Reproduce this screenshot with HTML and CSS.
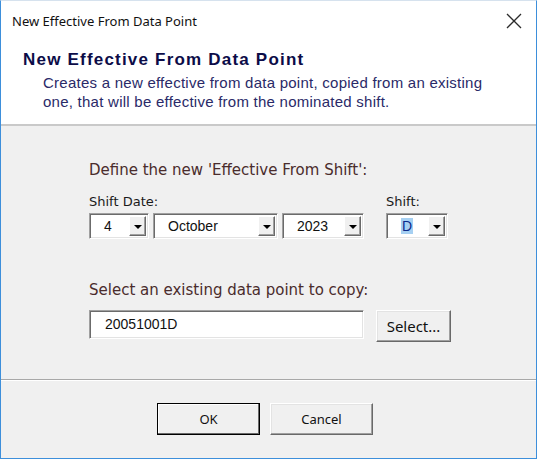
FILE: index.html
```html
<!DOCTYPE html>
<html>
<head>
<meta charset="utf-8">
<link rel="stylesheet" href="styles.css">
</head>
<body>
<div class="window">
  <div class="titlebar">
    <span class="title">New Effective From Data Point</span>
    <svg class="close" width="16" height="16" viewBox="0 0 16 16"><path d="M1 1 L15 15 M15 1 L1 15" stroke="#2b2b2b" stroke-width="1.3" fill="none"/></svg>
  </div>
  <div class="header">
    <div class="h-title">New Effective From Data Point</div>
    <div class="h-desc">Creates a new effective from data point, copied from an existing<br>one, that will be effective from the nominated shift.</div>
  </div>
  <div class="content">
    <div class="section-label">Define the new 'Effective From Shift':</div>
    <div class="date-row">
      <div class="group">
        <div class="small-label">Shift Date:</div>
        <div class="combos">
          <div class="combo w-day"><span class="val">4</span><span class="drop"><i class="tri"></i></span></div>
          <div class="combo w-month"><span class="val">October</span><span class="drop"><i class="tri"></i></span></div>
          <div class="combo w-year"><span class="val">2023</span><span class="drop"><i class="tri"></i></span></div>
        </div>
      </div>
      <div class="group">
        <div class="small-label">Shift:</div>
        <div class="combos">
          <div class="combo w-shift"><span class="val"><span class="sel">D</span></span><span class="drop"><i class="tri"></i></span></div>
        </div>
      </div>
    </div>
    <div class="section-label second">Select an existing data point to copy:</div>
    <div class="input-row">
      <div class="textbox">20051001D</div>
      <div class="btn raised select-btn">Select...</div>
    </div>
  </div>
  <div class="footer">
    <div class="btn default">OK</div>
    <div class="btn raised">Cancel</div>
  </div>
</div>
</body>
</html>
```

FILE: styles.css
```css
* { box-sizing: border-box; }
html, body { margin: 0; padding: 0; background: #ffffff; }
.window {
  width: 537px;
  height: 459px;
  border: 1px solid #3d8fdb;
  border-top-color: #d6e2ee;
  display: flex;
  flex-direction: column;
  background: #f0f0f0;
  font-family: "Liberation Sans", Arial, sans-serif;
}
.titlebar {
  height: 39px;
  background: #fff;
  display: flex;
  align-items: center;
  justify-content: space-between;
  padding: 0 14px 0 11px;
}
.title {
  font-family: "Noto Sans", "Open Sans", sans-serif;
  font-size: 13px;
  color: #111;
  margin-top: 1px;
}
.close { margin-top: 1px; }
.header {
  height: 86px;
  background: #fff;
  border-bottom: 2px solid #c9c9c9;
  padding: 10px 0 0 22px;
}
.h-title {
  font-weight: bold;
  font-size: 17px;
  letter-spacing: 1.2px;
  line-height: 20px;
  color: #0c0c48;
}
.h-desc {
  margin: 3px 0 0 20px;
  font-size: 15px;
  letter-spacing: 0.25px;
  line-height: 19px;
  color: #2a2a68;
}
.content {
  height: 254px;
  padding: 35px 0 0 88px;
  display: flex;
  flex-direction: column;
  align-items: flex-start;
  border-bottom: 1px solid #a8a8a8;
}
.section-label {
  font-family: "DejaVu Sans", Verdana, sans-serif;
  font-size: 15px;
  line-height: 18px;
  color: #4a2c2c;
}
.section-label.second { margin-top: 42px; }
.date-row {
  display: flex;
  gap: 22px;
  margin-top: 15px;
}
.group { display: flex; flex-direction: column; }
.small-label {
  font-family: "DejaVu Sans", Verdana, sans-serif;
  font-size: 13px;
  line-height: 16px;
  color: #1a1a1a;
  margin-bottom: 3px;
}
.combos { display: flex; gap: 4px; }
.combo {
  height: 26px;
  display: flex;
  background: #fff;
  border: 1px solid;
  border-color: #a0a0a0 #ffffff #ffffff #a0a0a0;
  box-shadow: inset 1px 1px 0 #6b6b6b, inset -1px -1px 0 #e3e3e3;
  padding: 2px;
}
.w-day { width: 60px; }
.w-month { width: 125px; }
.w-year { width: 82px; }
.w-shift { width: 62px; }
.val {
  flex: 1;
  font-size: 14px;
  line-height: 20px;
  padding-left: 12px;
  color: #111;
}
.sel {
  background: #a6d0f2;
  color: #0a2a8a;
  padding: 0 1px;
}
.drop {
  width: 17px;
  background: #f0f0f0;
  border: 1px solid;
  border-color: #ffffff #696969 #696969 #ffffff;
  box-shadow: inset -1px -1px 0 #a0a0a0;
  display: flex;
  align-items: center;
  justify-content: center;
}
.tri {
  width: 0;
  height: 0;
  border-left: 4px solid transparent;
  border-right: 4px solid transparent;
  border-top: 4px solid #000;
  margin-top: 1px;
}
.input-row {
  display: flex;
  gap: 12px;
  margin-top: 11px;
  align-items: flex-start;
}
.textbox {
  width: 275px;
  height: 29px;
  background: #fff;
  border: 1px solid;
  border-color: #a0a0a0 #ffffff #ffffff #a0a0a0;
  box-shadow: inset 1px 1px 0 #6b6b6b, inset -1px -1px 0 #e3e3e3;
  font-size: 14px;
  line-height: 27px;
  padding-left: 15px;
  color: #111;
}
.btn {
  display: flex;
  align-items: center;
  justify-content: center;
  font-family: "Noto Sans", "Open Sans", sans-serif;
  font-size: 13px;
  color: #111;
  background: #f0f0f0;
}
.raised {
  border: 1px solid;
  border-color: #ffffff #696969 #696969 #ffffff;
  box-shadow: inset -1px -1px 0 #a0a0a0, inset 1px 1px 0 #e3e3e3;
}
.select-btn { width: 75px; height: 32px; font-size: 15px; }
.footer {
  flex: 1;
  border-top: 1px solid #ffffff;
  display: flex;
  justify-content: center;
  align-items: flex-start;
  gap: 10px;
  padding: 22px 7px 0 0;
}
.footer .btn { width: 103px; height: 32px; }
.default {
  border: 1px solid #000;
  box-shadow: inset -1px -1px 0 #696969, inset 1px 1px 0 #ffffff;
}
```
